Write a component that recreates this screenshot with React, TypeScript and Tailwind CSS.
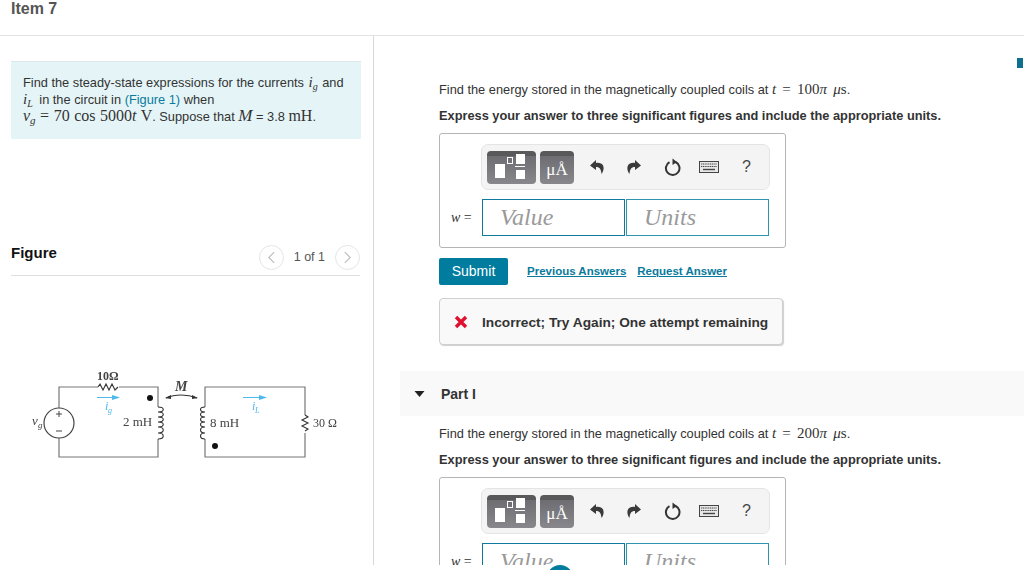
const serif = "font-['Liberation_Serif',serif]"

function Toolbar() {
  return (
    <div className="ml-[41px] flex h-[46px] w-[289px] items-center rounded-[7px] border border-[#e4e4e4] bg-[#f4f4f4] pl-[5px]">
      <div className="relative h-[33px] w-[49px] rounded-[4px] border-t-[5px] border-t-[#59595c] bg-gradient-to-b from-[#6e6e72] to-[#88888c]">
        <div className="absolute left-[8px] top-[8px] h-[14px] w-[10px] bg-white" />
        <div className="absolute left-[20px] top-[1px] h-[7px] w-[6px] border border-white" />
        <div className="absolute left-[29px] -top-[2px] h-[10px] w-[9px] bg-white" />
        <div className="absolute left-[28px] top-[10px] h-[1px] w-[10px] bg-white" />
        <div className="absolute left-[29px] top-[14px] h-[9px] w-[9px] bg-white" />
      </div>
      <div className="ml-[4px] flex h-[33px] w-[34px] items-center justify-center rounded-[4px] border-t-[5px] border-t-[#59595c] bg-gradient-to-b from-[#6e6e72] to-[#88888c] pb-[1px] font-['Liberation_Serif',serif] text-[17px] leading-none text-white">
        μÅ
      </div>
      <svg viewBox="0 0 16 16" className="ml-[15px] h-[16px] w-[16px]" fill="#3a3a3a">
        <path d="M7 1 1 6.500 7 11V8c3 0 5 1 5.500 7C15 12 15.800 6.500 12 4.600 10.500 3.900 9 3.700 7 4z" />
      </svg>
      <svg viewBox="0 0 16 16" className="ml-[21px] h-[16px] w-[16px]" fill="#3a3a3a">
        <path d="M9 1l6 5.500L9 11V8c-3 0-5 1-5.500 7C1 12 .2 6.500 4 4.600 5.500 3.900 7 3.700 9 4z" />
      </svg>
      <svg viewBox="0 0 18 18" className="ml-[22px] h-[18px] w-[18px]" fill="none" stroke="#333" strokeWidth="2">
        <path d="M11.500 4A6.800 6.800 0 1 1 5.500 4.200" />
        <path d="M8.500 .5l4.500 3.500-4.500 3z" fill="#333" stroke="none" />
      </svg>
      <svg viewBox="0 0 20 12" className="ml-[17px] h-[12px] w-[20px]">
        <rect x="0.5" y="0.5" width="19" height="11" fill="#e8e8e8" stroke="#444" />
        <path d="M2 3h16M2 5.500h16" stroke="#444" strokeWidth="1.200" strokeDasharray="1.200 .6" />
        <path d="M4 8.500h12" stroke="#444" strokeWidth="1.400" />
      </svg>
      <span className="ml-[23px] font-['Liberation_Sans',sans-serif] text-[16px] text-[#444]">?</span>
    </div>
  )
}

function AnswerFields() {
  return (
    <div className="mt-[9px] flex items-center">
      <span className={`${serif} w-[42px] pl-[11px] text-[14px] text-[#333]`}>
        <i>w</i> =
      </span>
      <div className={`${serif} flex h-[37px] w-[143px] items-center border border-[#0f7a9b] pb-[2px] pl-[17px] text-[24px] italic text-[#9a9a9a]`}>Value</div>
      <div className={`${serif} ml-[1px] flex h-[37px] w-[143px] items-center border border-[#2f94ae] pb-[2px] pl-[17px] text-[24px] italic text-[#9a9a9a]`}>Units</div>
    </div>
  )
}

function Circuit() {
  const text = "Liberation Serif, serif"
  return (
    <svg viewBox="0 0 340 110" className="mt-[84px] ml-[20px] block h-[110px] w-[340px] blur-[0.3px]" fill="none">
      <g stroke="#777" strokeWidth="1.200">
        <path d="M39 48V27H78M99 27H138V47M138 79V97H39V78" />
        <path d="M185 47V27H285V55M285 73V97H185V79" />
      </g>
      <circle cx="39" cy="63" r="15" stroke="#444" strokeWidth="1.200" />
      <g stroke="#333" strokeWidth="1.100">
        <path d="M78 27l2-3 3 6 3-6 3 6 3-6 3 6 3-3" />
        <path d="M285 55l3 2-6 3 6 3-6 3 6 3-3 2" />
        <path d="M138 47c7 0 7 5 0 5 7 0 7 5 0 5 7 0 7 5 0 5 7 0 7 5 0 5 7 0 7 6 0 6 7 0 7 6 0 6" />
        <path d="M185 47c-6 0-6 5 0 5-6 0-6 5 0 5-6 0-6 5 0 5-6 0-6 5 0 5-6 0-6 6 0 6-6 0-6 6 0 6" />
        <path d="M146 38c9-4 21-4 31 0" />
      </g>
      <path d="M145 38l6-3v4zM178 38l-6-3v4z" fill="#333" />
      <circle cx="130" cy="38" r="3" fill="#111" />
      <circle cx="195" cy="86" r="3" fill="#111" />
      <path d="M77 37.500H94M223 37.500H240" stroke="#4db8ee" strokeWidth="1.200" />
      <path d="M100 37.500l-8-2.500v5zM247 37.500l-8-2.500v5z" fill="#4db8ee" />
      <path d="M39 51v6M36 54h6M36 71h6" stroke="#444" />
      <text x="77" y="20" fontFamily={text} fontSize="12" fontWeight="700" fill="#444">10Ω</text>
      <text x="155" y="31" fontFamily={text} fontSize="14" fontWeight="700" fontStyle="italic" fill="#444">M</text>
      <text x="85" y="50" fontFamily={text} fontSize="12" fontStyle="italic" fill="#4db8ee">i</text>
      <text x="88" y="53" fontFamily={text} fontSize="8" fontStyle="italic" fill="#4db8ee">g</text>
      <text x="232" y="50" fontFamily={text} fontSize="12" fontStyle="italic" fill="#4db8ee">i</text>
      <text x="235" y="53" fontFamily={text} fontSize="8" fontStyle="italic" fill="#4db8ee">L</text>
      <text x="12" y="65" fontFamily={text} fontSize="13" fontStyle="italic" fill="#444">v</text>
      <text x="18" y="68" fontFamily={text} fontSize="9" fontStyle="italic" fill="#444">g</text>
      <text x="103" y="66" fontFamily={text} fontSize="13" fill="#444">2 mH</text>
      <text x="190" y="67" fontFamily={text} fontSize="13" fill="#444">8 mH</text>
      <text x="293" y="67" fontFamily={text} fontSize="12" fill="#444">30 Ω</text>
    </svg>
  )
}

export default function App() {
  return (
    <div className="relative h-[570px] w-[1024px] overflow-hidden bg-white font-['Liberation_Sans',sans-serif] text-[#333]">
      <div className="h-[36px] border-b border-[#e3e3e3] pl-[11px] pt-px text-[16px] font-bold leading-[16px] text-[#555]">Item 7</div>
      <div className="flex h-[529px] overflow-hidden">
        <div className="w-[374px] shrink-0 border-r border-[#d8d8d8]">
          <div className="ml-[11px] mt-[25px] h-[78px] w-[350px] border-t border-[#dde8ea] bg-[#e5f5f7] pl-[12px] pt-[12px] text-[12.8px] leading-[17px]">
            <div className="h-[17px]">
              Find the steady-state expressions for the currents <i className={`${serif} mx-[1px] text-[15px] leading-none`}>i<sub className="text-[10px] leading-none">g</sub></i> and
            </div>
            <div className="h-[17px]">
              <i className={`${serif} mr-[3px] text-[15px] leading-none`}>i<sub className="text-[10px] leading-none">L</sub></i> in the circuit in <span className="text-[#0a7a9c]">(Figure 1)</span> when
            </div>
            <div className="-mt-[1px] h-[17px]">
              <span className={`${serif} text-[16px] leading-none [word-spacing:0.5px]`}>
                <i>v<sub className="text-[11px] leading-none">g</sub></i> = 70 cos 5000<i>t</i> V
              </span>
              . Suppose that <i className={`${serif} text-[17px] leading-none`}>M</i> = 3.8 <span className={`${serif} text-[16px] leading-none`}>mH</span>.
            </div>
          </div>
          <div className="ml-[11px] mt-[100px] flex h-[37px] w-[349px] items-start justify-between border-b border-[#dedede]">
            <span className="pt-[5px] text-[15px] font-bold leading-[17px] text-[#111]">Figure</span>
            <div className="mt-[6px] flex items-center text-[12.5px] text-[#555]">
              <span className="flex h-[25px] w-[25px] items-center justify-center rounded-full border border-[#e5e5e5]">
                <svg viewBox="0 0 10 14" className="h-[13px] w-[9px]" fill="none" stroke="#bbb" strokeWidth="1.200"><path d="M8 1 2 7l6 6" /></svg>
              </span>
              <span className="ml-[10px] mr-[10px]">1 of 1</span>
              <span className="flex h-[25px] w-[25px] items-center justify-center rounded-full border border-[#e5e5e5]">
                <svg viewBox="0 0 10 14" className="h-[13px] w-[9px]" fill="none" stroke="#bbb" strokeWidth="1.200"><path d="M2 1l6 6-6 6" /></svg>
              </span>
            </div>
          </div>
          <Circuit />
        </div>

        <div className="min-w-0 flex-1 pl-[65px] pt-[45px]">
          <p className="h-[18px] text-[12.8px] leading-[18px]">
            Find the energy stored in the magnetically coupled coils at <span className={`${serif} text-[15px] leading-none [word-spacing:2.5px]`}><i>t</i> = 100<i>π</i> <i>μ</i>s</span>.
          </p>
          <p className="mt-[8px] text-[12.8px] font-bold leading-[18px]">Express your answer to three significant figures and include the appropriate units.</p>
          <div className="mt-[8px] h-[115px] w-[347px] rounded-[3px] border border-[#b5b5b5] pt-[10px]">
            <Toolbar />
            <AnswerFields />
          </div>
          <div className="mt-[10px] flex items-center">
            <div className="flex h-[27px] w-[69px] items-center justify-center rounded-[2px] bg-[#007c9e] text-[14px] text-white">Submit</div>
            <a className="ml-[19px] text-[11.5px] font-bold text-[#0a7a9c] underline">Previous Answers</a>
            <a className="ml-[11px] text-[11.5px] font-bold text-[#0a7a9c] underline">Request Answer</a>
          </div>
          <div className="mt-[13px] flex h-[47px] w-[344px] items-center rounded-[4px] border border-[#cfcfcf] bg-[#f9f9f9] pl-[14px] shadow-[1px_1px_1px_#d0d0d0]">
            <svg viewBox="0 0 14 14" className="h-[14px] w-[14px]"><path d="M2 2l10 10M12 2 2 12" stroke="#e0102f" strokeWidth="3.400" /></svg>
            <span className="ml-[14px] pt-[3px] text-[13.7px] font-bold text-[#333]">Incorrect; Try Again; One attempt remaining</span>
          </div>
          <div className="-ml-[39px] mt-[26px] flex h-[45px] items-center bg-[#f9f9f9] pt-[1px]">
            <svg viewBox="0 0 10 6" className="ml-[14px] h-[6px] w-[11px]"><path d="M0 0h10L5 6z" fill="#222" /></svg>
            <span className="ml-[16px] text-[14px] font-bold text-[#333]">Part I</span>
          </div>
          <p className="mt-[9px] h-[18px] text-[12.8px] leading-[18px]">
            Find the energy stored in the magnetically coupled coils at <span className={`${serif} text-[15px] leading-none [word-spacing:2.5px]`}><i>t</i> = 200<i>π</i> <i>μ</i>s</span>.
          </p>
          <p className="mt-[8px] text-[12.8px] font-bold leading-[18px]">Express your answer to three significant figures and include the appropriate units.</p>
          <div className="mt-[8px] h-[115px] w-[347px] rounded-[3px] border border-[#b5b5b5] pt-[10px]">
            <Toolbar />
            <AnswerFields />
          </div>
        </div>
      </div>
      <div className="absolute left-[1017px] top-[58px] h-[10px] w-[6px] bg-[#0f6f8f]" />
      <div className="absolute left-[547px] top-[565px] h-[26px] w-[26px] rounded-full bg-[#007c9e]" />
    </div>
  )
}
